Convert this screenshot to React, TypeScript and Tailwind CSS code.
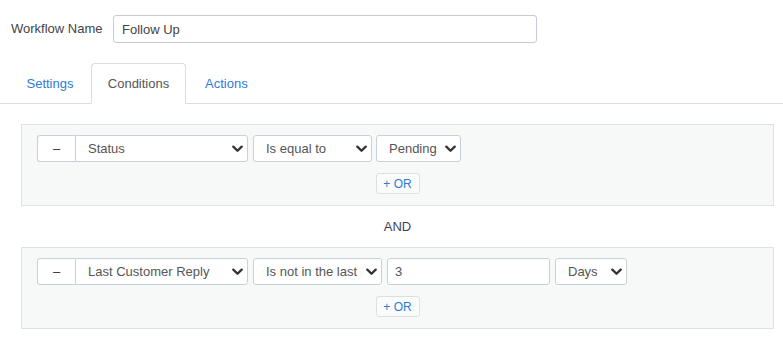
import React from 'react';

const font = "font-['Liberation_Sans',Arial,sans-serif]";

function Chevron() {
  return (
    <svg
      width="11"
      height="8"
      viewBox="0 0 11 8"
      className="pointer-events-none absolute right-[5px] top-1/2 -translate-y-1/2"
    >
      <path d="M1.3 1.6 L5.5 5.8 L9.7 1.6" fill="none" stroke="#333" strokeWidth="2.3" strokeLinecap="round" strokeLinejoin="round" />
    </svg>
  );
}

function Select({ value, className, grouped }: { value: string; className: string; grouped?: boolean }) {
  return (
    <div className={`relative h-[27px] ${className}`}>
      <select
        defaultValue={value}
        className={`h-full w-full appearance-none border border-[#c9d0d8] bg-white pl-[12px] pr-[16px] text-[13px] text-[#555] outline-none ${font} ${
          grouped ? 'rounded-r-[3px]' : 'rounded-[3px]'
        }`}
      >
        <option>{value}</option>
      </select>
      <Chevron />
    </div>
  );
}

function MinusButton() {
  return (
    <button className="h-[27px] w-[38px] rounded-l-[3px] border border-r-0 border-[#c9d0d8] bg-white text-[13px] text-[#333]">
      –
    </button>
  );
}

function OrButton() {
  return (
    <div className="flex justify-center">
      <button className="h-[21px] w-[44px] rounded-[3px] border border-[#dcdfe3] bg-[#fafbfb] text-[12px] text-[#2f7bd9]">
        + OR
      </button>
    </div>
  );
}

function Panel({ children }: { children: React.ReactNode }) {
  return (
    <div className="border border-[#dfe2e4] bg-[#f7f8f8] pt-[10px] pb-[11px]">
      <div className="flex items-center pl-[15px]">{children}</div>
      <div className="mt-[11px]">
        <OrButton />
      </div>
    </div>
  );
}

export default function App() {
  return (
    <div className={`min-h-screen bg-white pt-[15px] text-[13px] text-[#333] ${font}`}>
      <div className="flex items-center pl-[11px]">
        <label className="w-[102px] text-[#444]">Workflow Name</label>
        <input
          defaultValue="Follow Up"
          className={`h-[28px] w-[424px] rounded-[3px] border border-[#c5ccd5] px-[8px] text-[13px] text-[#444] outline-none ${font}`}
        />
      </div>

      <div className="mt-[20px] flex border-b border-[#dddddd] pl-[11px]">
        <div className="-mb-px mr-[2px] flex h-[41px] w-[78px] items-center justify-center text-[#2f7bd9]">Settings</div>
        <div className="-mb-px flex h-[41px] w-[95px] items-center justify-center rounded-t-[4px] border border-[#dddddd] border-b-white bg-white text-[#555]">
          Conditions
        </div>
        <div className="-mb-px flex h-[41px] items-center px-[19px] text-[#2f7bd9]">Actions</div>
      </div>

      <div className="ml-[21px] mr-[9px] mt-[20px]">
        <Panel>
          <MinusButton />
          <Select value="Status" grouped className="w-[173px]" />
          <Select value="Is equal to" className="ml-[5px] w-[119px]" />
          <Select value="Pending" className="ml-[4px] w-[85px]" />
        </Panel>

        <div className="flex h-[41px] items-center justify-center text-[#3d4650]">AND</div>

        <Panel>
          <MinusButton />
          <Select value="Last Customer Reply" grouped className="w-[173px]" />
          <Select value="Is not in the last" className="ml-[5px] w-[129px]" />
          <input
            defaultValue="3"
            className={`ml-[5px] h-[27px] w-[163px] rounded-[3px] border border-[#c9d0d8] bg-white px-[7px] text-[13px] text-[#555] outline-none ${font}`}
          />
          <Select value="Days" className="ml-[5px] w-[72px]" />
        </Panel>
      </div>
    </div>
  );
}
